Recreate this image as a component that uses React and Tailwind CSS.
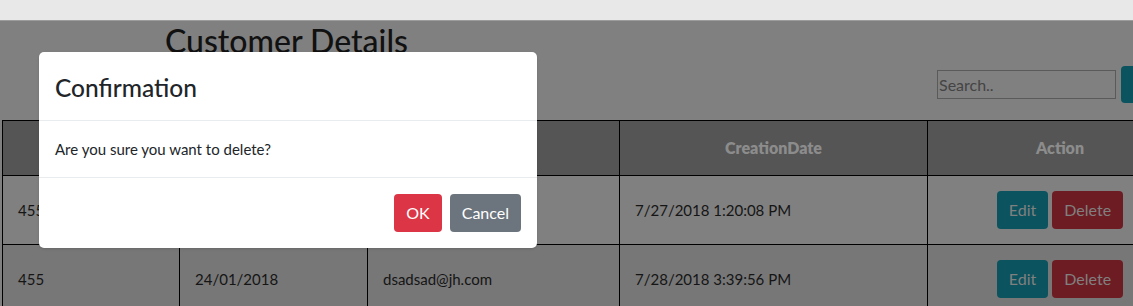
import React from 'react';

const rows = [
    { id: '455', dob: '24/01/2018', email: 'dsadsad@jh.com', created: '7/27/2018 1:20:08 PM', bg: 'bg-[#808080]' },
    { id: '455', dob: '24/01/2018', email: 'dsadsad@jh.com', created: '7/28/2018 3:39:56 PM', bg: 'bg-[#777777]' },
];

const App = () => {
    return (
        <div className="relative w-[1133px] h-[306px] overflow-hidden bg-[#808080] text-[16px] text-[#151515]" style={{ fontFamily: 'Lato, "Noto Sans", sans-serif' }}>
            {/* top strip */}
            <div className="h-[20px] bg-[#e8e8e8] border-b border-[#9c9c9c] box-content" />

            {/* Page */}
            <h2 className="pl-[165px] pt-[1px] text-[32px] leading-[38px] font-medium text-[#111]">Customer Details</h2>

            <div className="flex justify-end items-center gap-[5px] mt-[6px] h-[37px] -mr-[40px]">
                <input
                    placeholder="Search.."
                    className="w-[179px] h-[29px] border border-[#5a5a5a] bg-transparent px-[1px] text-[16px] placeholder:text-[#444] outline-none"
                />
                <button className="w-[52px] h-[37px] rounded-[4px] bg-[#0b535e]"></button>
            </div>

            <table className="mt-[17px] ml-[2px] w-[1190px] table-fixed border-collapse border border-black text-[15px]">
                <colgroup>
                    <col className="w-[177px]" />
                    <col className="w-[188px]" />
                    <col className="w-[252px]" />
                    <col className="w-[308px]" />
                    <col className="w-[265px]" />
                </colgroup>
                <thead>
                    <tr className="bg-[#555555] text-[#8c8c8c] h-[55px] text-[16px]">
                        <th className="border border-black font-extrabold">Id</th>
                        <th className="border border-black font-extrabold">DOB</th>
                        <th className="border border-black font-extrabold"></th>
                        <th className="border border-black font-extrabold">CreationDate</th>
                        <th className="border border-black font-extrabold">Action</th>
                    </tr>
                </thead>
                <tbody>
                    {rows.map((r, i) => (
                        <tr key={i} className={`${r.bg} h-[69px]`}>
                            <td className="border border-black px-[15px]">{r.id}</td>
                            <td className="border border-black px-[15px]">{r.dob}</td>
                            <td className="border border-black px-[15px]">{r.email}</td>
                            <td className="border border-black px-[15px]">{r.created}</td>
                            <td className="border border-black px-[15px]">
                                <div className="flex justify-center gap-[4px] text-[16px]">
                                    <button className="h-[38px] px-3 rounded-[4px] bg-[#0b535e] text-[#808080]">Edit</button>
                                    <button className="h-[38px] px-3 rounded-[4px] bg-[#6e1c23] text-[#808080]">Delete</button>
                                </div>
                            </td>
                        </tr>
                    ))}
                </tbody>
            </table>

            {/* Modal */}
            <div className="absolute left-[39px] top-[52px] w-[498px] bg-white rounded-[5px] text-[#212529] shadow-sm">
                <div className="px-4 pt-[18px] pb-[14px] border-b border-[#e9ecef]">
                    <h4 className="text-[24.5px] leading-[36px] font-medium">Confirmation</h4>
                </div>
                <div className="p-4 text-[15px] leading-6">Are you sure you want to delete?</div>
                <div className="p-4 flex justify-end gap-2 border-t border-[#e9ecef]">
                    <button className="h-[38px] px-3 rounded-[4px] bg-[#dc3545] text-white">OK</button>
                    <button className="h-[38px] px-3 rounded-[4px] bg-[#6c757d] text-white">Cancel</button>
                </div>
            </div>
        </div>
    );
};

export default App;
